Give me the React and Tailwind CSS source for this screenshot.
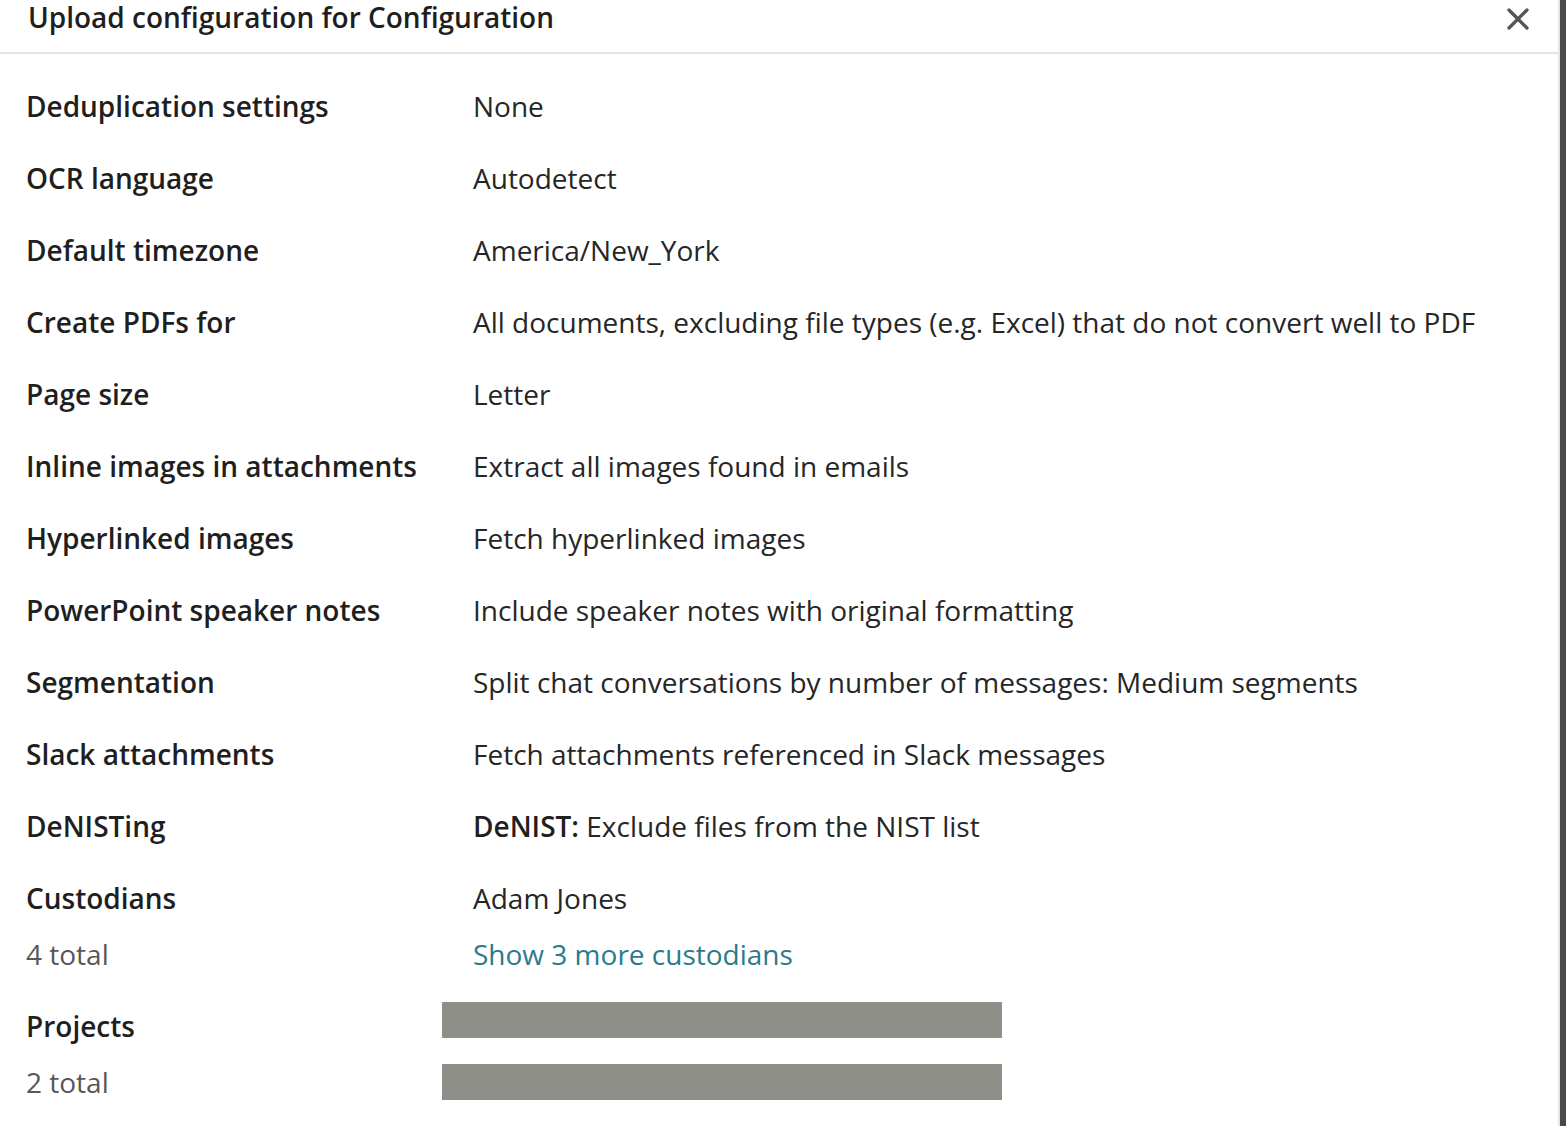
import { X } from 'lucide-react';

const rows = [
  ['Deduplication settings', 'None'],
  ['OCR language', 'Autodetect'],
  ['Default timezone', 'America/New_York'],
  ['Create PDFs for', 'All documents, excluding file types (e.g. Excel) that do not convert well to PDF'],
  ['Page size', 'Letter'],
  ['Inline images in attachments', 'Extract all images found in emails'],
  ['Hyperlinked images', 'Fetch hyperlinked images'],
  ['PowerPoint speaker notes', 'Include speaker notes with original formatting'],
  ['Segmentation', 'Split chat conversations by number of messages: Medium segments'],
  ['Slack attachments', 'Fetch attachments referenced in Slack messages'],
];

function Row({ label, children }) {
  return (
    <div className="flex h-[72px] items-center">
      <div className="w-[447px] shrink-0 font-semibold text-[#1f1f1f]">{label}</div>
      <div className="text-[#262626]">{children}</div>
    </div>
  );
}

export default function App() {
  return (
    <div
      className="flex h-[1126px] w-full overflow-hidden bg-white text-[28px] leading-[36px]"
      style={{ fontFamily: '"Open Sans", "Noto Sans", sans-serif' }}
    >
      <div className="flex flex-1 flex-col border-r-2 border-[#e5e5e3] bg-white">
        {/* Header */}
        <div className="flex h-[54px] shrink-0 items-start justify-between border-b-2 border-[#e3e3e1] pl-[28px] pr-[22px]">
          <h2 className="font-semibold leading-[34px] text-[#1f1f1f]">Upload configuration for Configuration</h2>
          <button className="mt-[1px] flex h-[36px] w-[36px] items-center justify-center text-[#555552]">
            <X className="h-[40px] w-[40px]" strokeWidth={2.2} />
          </button>
        </div>

        {/* Body */}
        <div className="flex flex-col pl-[26px] pt-[16px]">
          {rows.map(([label, value]) => (
            <Row key={label} label={label}>
              {value}
            </Row>
          ))}
          <Row label="DeNISTing">
            <span className="font-semibold text-[#1f1f1f]">DeNIST:</span> Exclude files from the NIST list
          </Row>

          {/* Custodians */}
          <div className="flex pt-[18px] pb-[18px]">
            <div className="flex w-[447px] shrink-0 flex-col gap-[20px]">
              <div className="font-semibold text-[#1f1f1f]">Custodians</div>
              <div className="text-[#585856]">4 total</div>
            </div>
            <div className="flex flex-col gap-[20px]">
              <div className="text-[#262626]">Adam Jones</div>
              <a className="cursor-pointer text-[#2b7a8e]">Show 3 more custodians</a>
            </div>
          </div>

          {/* Projects */}
          <div className="flex pt-[18px]">
            <div className="flex w-[447px] shrink-0 flex-col gap-[20px]">
              <div className="font-semibold text-[#1f1f1f]">Projects</div>
              <div className="text-[#585856]">2 total</div>
            </div>
            <div className="-ml-[31px] -mt-[6px] flex flex-col gap-[26px]">
              <div className="h-[36px] w-[560px] bg-[#8f8f8a]" />
              <div className="h-[36px] w-[560px] bg-[#8f8f8a]" />
            </div>
          </div>
        </div>
      </div>
      <div className="w-[6px] shrink-0 bg-[#4a4a4a]" />
    </div>
  );
}
